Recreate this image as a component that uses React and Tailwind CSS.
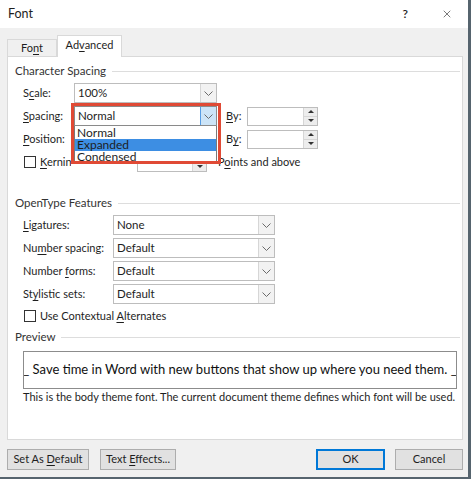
import { X } from 'lucide-react'

function Chevron({ className = 'stroke-[#6b6b6b]' }) {
  return (
    <svg width="9" height="5" viewBox="0 0 9 5" fill="none" className={className}>
      <path d="M0.5 0.5L4.5 4.5L8.5 0.5" strokeWidth="1" />
    </svg>
  )
}

function Combo({ value, width, pressed = false }) {
  return (
    <div className={`flex h-full ${width} border bg-white ${pressed ? 'border-[#8a8a8a]' : 'border-[#bdbdbd]'}`}>
      <span className="flex-1 pl-[3px] text-[11.5px] leading-[18px]">{value}</span>
      <span
        className={`flex w-[16px] items-center justify-center border-l ${
          pressed ? 'border-[#569de5] bg-[#cce4f7]' : 'border-[#d6d6d6] bg-[#f2f2f2]'
        }`}
      >
        <Chevron />
      </span>
    </div>
  )
}

function Spin({ width = 'w-[71px]' }) {
  return (
    <div className={`flex h-[19px] ${width} border border-[#bdbdbd] bg-white`}>
      <span className="flex-1" />
      <span className="flex w-[14px] flex-col border-l border-[#d6d6d6] bg-[#ededed]">
        <span className="flex flex-1 items-center justify-center border-b border-[#d6d6d6]">
          <svg width="6" height="3" viewBox="0 0 6 3">
            <path d="M0 3L3 0L6 3Z" fill="#333" />
          </svg>
        </span>
        <span className="flex flex-1 items-center justify-center">
          <svg width="6" height="3" viewBox="0 0 6 3">
            <path d="M0 0L3 3L6 0Z" fill="#333" />
          </svg>
        </span>
      </span>
    </div>
  )
}

function Section({ title }) {
  return (
    <div className="flex h-[16px] items-center pl-[7px] pr-[2px]">
      <span className="text-[11.5px] text-[#333]">{title}</span>
      <span className="ml-[6px] h-px flex-1 bg-[#dddddd]" />
    </div>
  )
}

function Checkbox() {
  return <span className="h-[12px] w-[12px] shrink-0 border border-[#333] bg-white" />
}

function Key({ children }) {
  return <span className="underline underline-offset-2">{children}</span>
}

const typeRows = [
  { label: <><Key>L</Key>igatures:</>, value: 'None' },
  { label: <>Nu<Key>m</Key>ber spacing:</>, value: 'Default' },
  { label: <>Number <Key>f</Key>orms:</>, value: 'Default' },
  { label: <>St<Key>y</Key>listic sets:</>, value: 'Default' },
]

function Button({ children, primary = false, width }) {
  return (
    <button
      className={`flex h-[21px] ${width} items-center justify-center bg-[#e1e1e1] ${
        primary ? 'border-2 border-[#0078d7]' : 'border border-[#adadad]'
      }`}
    >
      <span>{children}</span>
    </button>
  )
}

export default function App() {
  return (
    <div className="h-[481px] w-[474px] overflow-hidden whitespace-nowrap bg-white font-['Lato','Noto_Sans',sans-serif] text-[11px] text-[#1e1e1e]">
      <div className="flex h-[479px] w-[471px] flex-col border-b-2 border-r-[3px] border-[#56646e] bg-[#f0f0f0]">
        {/* title bar */}
        <div className="flex h-[28px] items-center bg-white pl-[8px] pr-[15px]">
          <span className="text-[12.5px]">Font</span>
          <span className="ml-auto text-[12px] font-semibold">?</span>
          <X className="ml-[33px] size-[12px]" strokeWidth={1.2} />
        </div>

        {/* tabs */}
        <div className="flex h-[28px] items-end pl-[7px]">
          <div className="flex h-[17px] w-[50px] items-center justify-center border border-b-0 border-[#d9d9d9] bg-[#f0f0f0]">
            <span>Fo<Key>n</Key>t</span>
          </div>
          <div className="relative z-10 -mb-px flex h-[22px] w-[65px] items-center justify-center border border-b-0 border-[#d9d9d9] bg-white pb-[2px]">
            <span>Ad<Key>v</Key>anced</span>
          </div>
        </div>

        {/* panel */}
        <div className="ml-[7px] flex h-[384px] w-[456px] flex-col border border-[#d9d9d9] bg-white">
          <div className="mt-[6px]">
            <Section title="Character Spacing" />
          </div>

          <div className="mt-[4px] flex flex-col gap-[3px] pl-[15px]">
            <div className="flex h-[20px] items-center">
              <span className="w-[51px]">S<Key>c</Key>ale:</span>
              <Combo value="100%" width="w-[143px]" />
            </div>

            <div className="relative z-20 flex h-[20px] items-center">
              <span className="w-[51px]"><Key>S</Key>pacing:</span>
              <div className="relative h-full">
                <Combo value="Normal" width="w-[143px]" pressed />
                {/* open list, drawn over the rows below */}
                <div className="absolute left-0 top-[20px] flex w-[143px] flex-col border-x border-[#7a7a7a] bg-white pt-px text-[12px] leading-[12px]">
                  <span className="h-[12px] pl-[2px]">Normal</span>
                  <span className="h-[12px] bg-[#3d8ee3] pl-[2px]">Expanded</span>
                  <span className="h-[11px] pl-[2px]">Condensed</span>
                </div>
                <div className="pointer-events-none absolute -left-[3px] -top-[3px] h-[61px] w-[150px] border-[3px] border-[#e04a35]" />
              </div>
              <span className="ml-[9px] w-[21px]"><Key>B</Key>y:</span>
              <Spin />
            </div>

            <div className="flex h-[20px] items-center">
              <span className="w-[51px]"><Key>P</Key>osition:</span>
              <Combo value="" width="w-[143px]" />
              <span className="ml-[9px] w-[21px]">B<Key>y</Key>:</span>
              <Spin />
            </div>

            <div className="flex h-[20px] items-center">
              <div className="flex w-[48px] items-center overflow-hidden pl-px">
                <Checkbox />
                <span className="ml-[4px]"><Key>K</Key>erning</span>
              </div>
              <div className="ml-[66px]">
                <Spin width="w-[70px]" />
              </div>
              <span className="ml-[11px]">P<Key>o</Key>ints and above</span>
            </div>
          </div>

          <div className="mt-[23px]">
            <Section title="OpenType Features" />
          </div>

          <div className="mt-[4px] flex flex-col gap-[3px] pl-[15px]">
            {typeRows.map((row, i) => (
              <div key={i} className="flex h-[20px] items-center">
                <span className="w-[90px]">{row.label}</span>
                <Combo value={row.value} width="w-[162px]" />
              </div>
            ))}
          </div>

          <div className="mt-[4px] flex h-[16px] items-center pl-[16px]">
            <Checkbox />
            <span className="ml-[4px]">Use Contextual <Key>A</Key>lternates</span>
          </div>

          <div className="mt-[5px]">
            <Section title="Preview" />
          </div>

          <div className="ml-[15px] mt-[6px] flex h-[38px] w-[434px] items-center justify-center overflow-hidden border border-[#8c8c8c] text-[13px] text-[#111]">
            _ Save time in Word with new buttons that show up where you need them. _
          </div>

          <div className="ml-[15px] mt-px w-[434px] leading-[14px]">
            This is the body theme font. The current document theme defines which font will be used.
          </div>
        </div>

        {/* buttons */}
        <div className="mt-[9px] flex pl-[7px] pr-[5px]">
          <Button width="w-[82px]">Set As <Key>D</Key>efault</Button>
          <div className="ml-[11px]">
            <Button width="w-[76px]">Text <Key>E</Key>ffects...</Button>
          </div>
          <div className="ml-auto flex gap-[10px]">
            <Button width="w-[69px]" primary>OK</Button>
            <Button width="w-[68px]">Cancel</Button>
          </div>
        </div>
      </div>
    </div>
  )
}
